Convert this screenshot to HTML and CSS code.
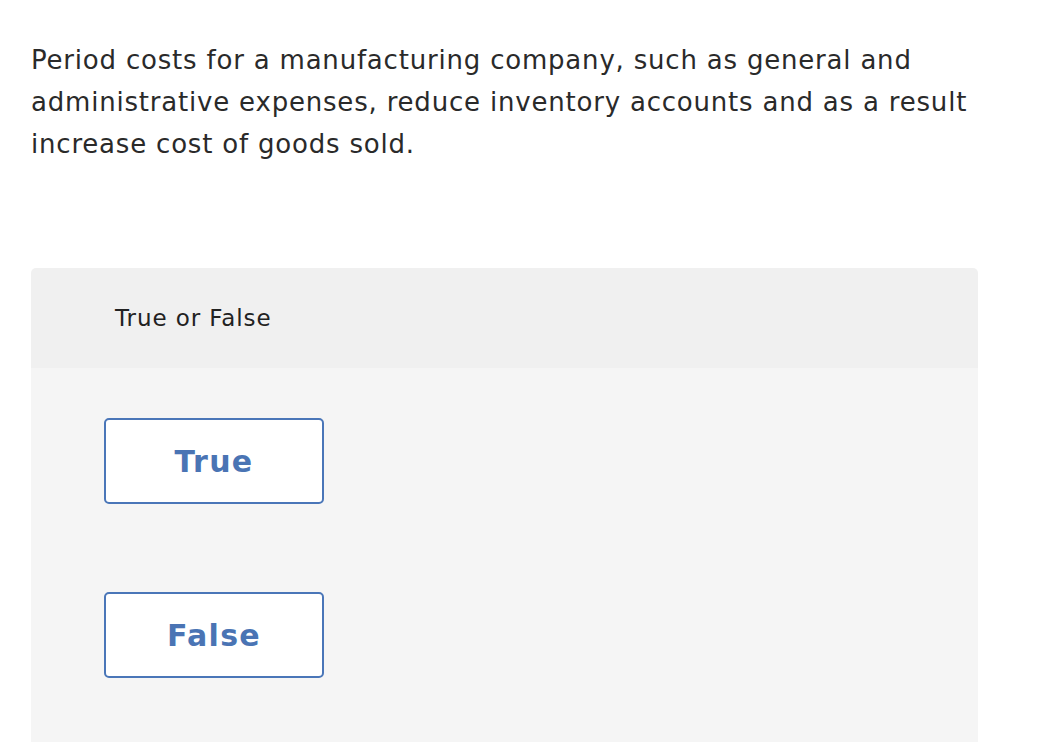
FILE: index.html
```html
<!DOCTYPE html>
<html>
<head>
<meta charset="utf-8">
<link rel="stylesheet" href="styles.css">
</head>
<body>
<div class="page">
  <p class="question">Period costs for a manufacturing company, such as general and administrative expenses, reduce inventory accounts and as a result increase cost of goods sold.</p>
  <div class="panel">
    <div class="panel-head">True or False</div>
    <div class="panel-body">
      <button class="choice">True</button>
      <button class="choice">False</button>
    </div>
  </div>
</div>
</body>
</html>
```
FILE: styles.css
```css
html, body {
  margin: 0;
  padding: 0;
  background: #ffffff;
}
body {
  font-family: "DejaVu Sans", "Open Sans", sans-serif;
  color: #2a2a2a;
}
.page {
  padding: 39px 0 0 31px;
  width: 947px;
}
.question {
  margin: 0;
  font-size: 26px;
  line-height: 42px;
  letter-spacing: 0.8px;
  max-width: 947px;
}
.panel {
  margin-top: 103px;
  width: 947px;
  border-radius: 5px 5px 0 0;
  overflow: hidden;
}
.panel-head {
  background: #f0f0f0;
  height: 100px;
  display: flex;
  align-items: center;
  padding-left: 84px;
  font-size: 23px;
  letter-spacing: 0.9px;
  color: #222;
}
.panel-body {
  background: #f5f5f5;
  padding: 50px 0 70px 73px;
  display: flex;
  flex-direction: column;
  gap: 88px;
  align-items: flex-start;
}
.choice {
  width: 220px;
  height: 86px;
  background: #fff;
  border: 2px solid #4a76b8;
  border-radius: 5px;
  font-family: inherit;
  font-size: 30px;
  font-weight: 700;
  letter-spacing: 1.3px;
  color: #4a74b4;
  cursor: pointer;
  padding: 0;
}
```
